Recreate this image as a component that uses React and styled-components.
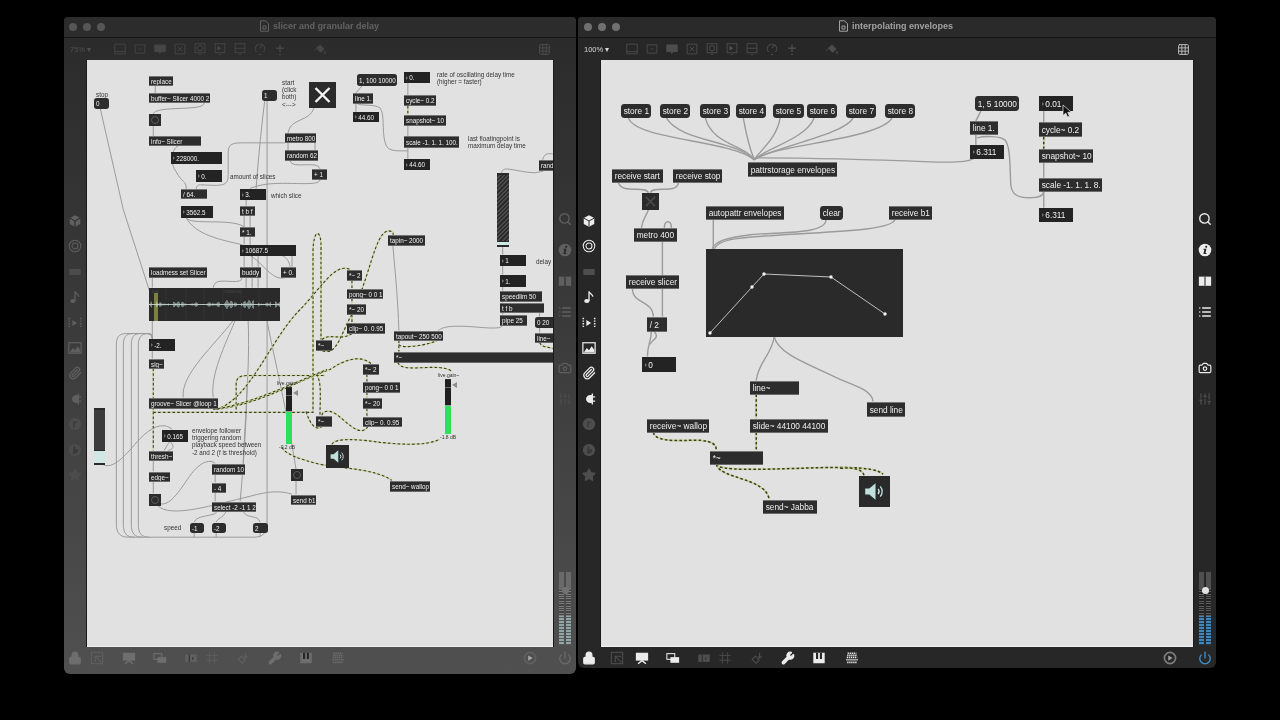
import React from "react";
import styled, { createGlobalStyle } from "styled-components";
import {
  Search,
  Lock,
  Wrench,
  Camera,
  SlidersVertical,
  Star,
  Paperclip,
  Power,
  Grid3x3,
  List,
} from "lucide-react";

const GlobalStyle = createGlobalStyle`
  html, body {
    margin: 0;
    background: #000;
    font-family: "Liberation Sans", Arial, sans-serif;
  }
`;

const Stage = styled.div`
  width: 1280px;
  height: 720px;
  box-sizing: border-box;
  padding: 17px 0 0 64px;
  display: flex;
  align-items: flex-start;
  gap: 2px;
  overflow: hidden;
  background: #000;
`;

const Window = styled.div`
  width: ${(p) => p.$w}px;
  height: ${(p) => p.$h}px;
  display: flex;
  flex-direction: column;
  border-radius: 4px 4px 6px 6px;
  overflow: hidden;
  filter: blur(0.35px);
  background: ${(p) =>
    p.$active ? "#272727" : "linear-gradient(180deg, #2a2a2a 0%, #3a3a3a 45%, #505050 100%)"};
`;

const TitleBar = styled.div`
  height: 20px;
  flex: none;
  display: flex;
  align-items: center;
  position: relative;
  padding-left: ${(p) => (p.$active ? 6 : 5)}px;
  gap: 6px;
  border-bottom: 1px solid #141414;
  background: ${(p) => (p.$active ? "#2a2a2a" : "#2c2c2c")};
`;

const Light = styled.span`
  width: 8px;
  height: 8px;
  border-radius: 50%;
  background: ${(p) => (p.$active ? "#707070" : "#565656")};
`;

const Title = styled.div`
  position: absolute;
  left: ${(p) => p.$x}px;
  top: 3px;
  display: flex;
  align-items: center;
  gap: 3px;
  font-size: 9px;
  font-weight: 700;
  color: ${(p) => (p.$active ? "#a2a2a2" : "#626262")};
`;

const Toolbar = styled.div`
  height: 22px;
  flex: none;
  display: flex;
  align-items: center;
  gap: 8px;
  padding-right: ${(p) => p.$right}px;
  color: ${(p) => (p.$active ? "#4d4d4d" : "#464646")};
`;

const ZoomLabel = styled.div`
  width: ${(p) => p.$w}px;
  margin-right: -8px;
  box-sizing: border-box;
  padding-left: 6px;
  font-size: 7.5px;
  color: ${(p) => (p.$active ? "#d6d6d6" : "#505050")};
`;

const ToolSlot = styled.span`
  display: flex;
  width: 12px;
  height: 12px;
  margin-left: ${(p) => p.$gap || 0}px;
`;

const GridSlot = styled.span`
  display: flex;
  margin-left: auto;
  color: ${(p) => (p.$active ? "#c8c8c8" : "#505050")};
`;

const Body = styled.div`
  flex: none;
  height: 587px;
  display: flex;
`;

const Sidebar = styled.div`
  width: 23px;
  flex: none;
  display: flex;
  flex-direction: column;
  align-items: center;
  box-sizing: border-box;
  padding-top: ${(p) => p.$top}px;
  padding-bottom: 2px;
  gap: ${(p) => p.$gap}px;
  border-${(p) => p.$edge}: 1px solid #1a1a1a;
`;

const SideSlot = styled.span`
  display: flex;
  width: 14px;
  height: 14px;
  margin-top: ${(p) => p.$gap || 0}px;
  color: ${(p) => (p.$off ? p.$dimOff : p.$dimOn)};
`;

const Canvas = styled.div`
  flex: 1;
  position: relative;
  overflow: hidden;
  background: #e1e1e1;
  font-size: ${(p) => p.$font}px;
  border-bottom: 1px solid #f2f2f2;
`;

const CableLayer = styled.svg`
  position: absolute;
  left: 0;
  top: 0;
  width: 100%;
  height: 100%;
  pointer-events: none;
`;

const Cable = styled.path`
  fill: none;
  stroke: #9b9b9b;
  stroke-width: ${(p) => p.$sw}px;
`;

const SignalBase = styled.path`
  fill: none;
  stroke: #c9d39a;
  stroke-width: ${(p) => p.$sw}px;
`;

const SignalDash = styled.path`
  fill: none;
  stroke: #39401f;
  stroke-width: ${(p) => p.$sw}px;
  stroke-dasharray: 2.6 2.2;
`;

const Node = styled.div`
  position: absolute;
  left: ${(p) => p.$x}px;
  top: ${(p) => p.$y}px;
  width: ${(p) => p.$w}px;
  height: ${(p) => p.$h}px;
  box-sizing: border-box;
  display: flex;
  align-items: center;
  white-space: nowrap;
  overflow: hidden;
  color: #f0f0f0;
  padding: 0 0.32em;
  background: ${(p) => (p.$kind === "num" ? "#232323" : "#2d2d2d")};
  border-radius: ${(p) => (p.$kind === "msg" ? "0.42em" : "0")};
  ${(p) =>
    p.$kind === "obj" &&
    `
    border-top: 0.21em solid #757575;
    border-bottom: 0.21em solid #6a6a6a;
  `}
`;

const NumArrow = styled.span`
  flex: none;
  width: 0;
  height: 0;
  margin-right: 0.2em;
  border-left: 0.36em solid #6f6f6f;
  border-top: 0.36em solid transparent;
  border-bottom: 0.36em solid transparent;
`;

const BangBox = styled.div`
  position: absolute;
  left: ${(p) => p.$x}px;
  top: ${(p) => p.$y}px;
  width: ${(p) => p.$s}px;
  height: ${(p) => p.$s}px;
  box-sizing: border-box;
  background: #2b2b2b;
  display: flex;
  align-items: center;
  justify-content: center;
`;

const BangRing = styled.span`
  width: 58%;
  height: 58%;
  border-radius: 50%;
  border: 1px solid #5c5c5c;
`;

const Comment = styled.div`
  position: absolute;
  left: ${(p) => p.$x}px;
  top: ${(p) => p.$y}px;
  white-space: pre;
  line-height: 1.14;
  color: #333;
`;

const DrawnBox = styled.div`
  position: absolute;
  left: ${(p) => p.$x}px;
  top: ${(p) => p.$y}px;
  width: ${(p) => p.$w}px;
  height: ${(p) => p.$h}px;
  display: flex;
  background: #2a2a2a;
`;

const SliderBox = styled.div`
  position: absolute;
  left: ${(p) => p.$x}px;
  top: ${(p) => p.$y}px;
  width: ${(p) => p.$w}px;
  height: ${(p) => p.$h}px;
  background: ${(p) =>
    p.$hatched
      ? "repeating-linear-gradient(135deg, #2c2c2c 0 1.5px, #4c4c4c 1.5px 3px)"
      : "#3c3c3c"};
  border-top: 2px solid #2a2a2a;
`;

const SliderFoot = styled.div`
  position: absolute;
  left: 0;
  right: 0;
  bottom: 0;
  height: ${(p) => p.$h}px;
  background: #cfe8e3;
  border-top: 1px solid #2a2a2a;
  border-bottom: 2px solid #2a2a2a;
`;

const GainTrack = styled.div`
  position: absolute;
  left: ${(p) => p.$x}px;
  top: ${(p) => p.$y}px;
  width: 6px;
  height: ${(p) => p.$h}px;
  background: #1f1f1f;
  border-top: 1px solid #333;
`;

const GainFill = styled.div`
  position: absolute;
  left: 0;
  right: 0;
  bottom: 0;
  height: ${(p) => p.$h}px;
  background: #2de05c;
  border-top: 1px solid #9c9c9c;
`;

const GainMark = styled.div`
  position: absolute;
  left: 0;
  right: 0;
  top: 7px;
  height: 1px;
  background: #6b6b6b;
`;

const GainThumb = styled.div`
  position: absolute;
  left: 7px;
  top: 2px;
  width: 0;
  height: 0;
  border-right: 5px solid #8d8d8d;
  border-top: 3px solid transparent;
  border-bottom: 3px solid transparent;
`;

const GainLabel = styled.div`
  position: absolute;
  left: ${(p) => p.$x}px;
  top: ${(p) => p.$y}px;
  font-size: 5px;
  color: #333;
  white-space: nowrap;
`;

const Pointer = styled.svg`
  position: absolute;
  left: ${(p) => p.$x}px;
  top: ${(p) => p.$y}px;
`;

const BottomBar = styled.div`
  height: 22px;
  flex: none;
  display: flex;
  align-items: center;
  padding-left: 4px;
  padding-right: 4px;
`;

const BarSlot = styled.span`
  display: flex;
  width: 14px;
  height: 14px;
  margin-left: ${(p) => p.$gap || 0}px;
  color: ${(p) => (p.$off ? p.$dimOff : p.$dimOn)};
`;

const PlaySlot = styled.span`
  display: flex;
  margin-left: auto;
  width: 14px;
  height: 14px;
  color: ${(p) => (p.$active ? "#9a9a9a" : "#656565")};
`;

const PowerSlot = styled.span`
  display: flex;
  width: 14px;
  height: 14px;
  margin-left: 21px;
  color: ${(p) => (p.$active ? "#3f93cf" : "#6a6a6a")};
`;

const Meter = styled.div`
  margin-top: auto;
  position: relative;
  display: flex;
  gap: 2px;
  height: 73px;
`;

const MeterBar = styled.div`
  width: 5px;
  background:
    linear-gradient(${(p) => p.$top} 0 18px, transparent 18px),
    repeating-linear-gradient(180deg, ${(p) => p.$tick} 0 1px, ${(p) => p.$track} 1px 2.4px) top / 100% 44px no-repeat,
    repeating-linear-gradient(180deg, ${(p) => p.$level} 0 2px, ${(p) => p.$gapColor} 2px 3px) bottom / 100% 30px no-repeat;
`;

const MeterKnob = styled.div`
  position: absolute;
  left: 50%;
  top: 15px;
  width: 7px;
  height: 7px;
  margin-left: -3.5px;
  border-radius: 50%;
  background: ${(p) => p.$color};
`;

const pathIcon = (children, fill = "none") => (
  <svg width="100%" height="100%" viewBox="0 0 16 16" fill={fill} stroke="currentColor" strokeWidth="1.2">
    {children}
  </svg>
);

const Cube = () =>
  pathIcon(
    <>
      <path d="M8 1.5l6 3.2v6.6l-6 3.2-6-3.2V4.7z" fill="currentColor" stroke="none" />
      <path d="M2.2 4.8L8 8l5.8-3.2M8 8v6.2" stroke="#272727" strokeWidth="1.1" />
    </>
  );
const Target = () =>
  pathIcon(
    <>
      <circle cx="8" cy="8" r="6.6" />
      <circle cx="8" cy="8" r="3.4" />
    </>
  );
const Bar = () => pathIcon(<rect x="1.5" y="4.5" width="13" height="7" rx="1" fill="currentColor" stroke="none" />);
const Note = () =>
  pathIcon(
    <>
      <ellipse cx="5.5" cy="12.6" rx="3" ry="2.2" fill="currentColor" stroke="none" />
      <path d="M8 12.5V1.5c.5 2.5 4 3 4.5 6" strokeWidth="1.5" />
    </>
  );
const Split = () =>
  pathIcon(
    <>
      <path d="M1.5 2v12M14.5 2v12" strokeDasharray="1.6 1.4" strokeWidth="1.8" />
      <path d="M5 4.5L10.5 8 5 11.5z" fill="currentColor" stroke="none" />
    </>
  );
const Picture = () =>
  pathIcon(
    <>
      <rect x="1" y="2" width="14" height="12" fill="none" strokeWidth="1.4" />
      <path d="M2 13l3.5-5 2.5 2.5L11 6l3 4v3z" fill="currentColor" stroke="none" />
    </>
  );
const Plug = () =>
  pathIcon(
    <path
      d="M1 8h3.5c.5-3 2.5-4.5 5-4.5H11V1.8h1.6v3H15v1.6h-2.4v3.2H15v1.6h-2.4v3H11v-1.7H9.5c-2.5 0-4.5-1.5-5-4.5H1z"
      fill="currentColor"
      stroke="none"
    />
  );
const Letter = ({ t }) => (
  <svg width="100%" height="100%" viewBox="0 0 16 16">
    <circle cx="8" cy="8" r="7" fill="currentColor" />
    <path
      d={t === "r" ? "M6 12V5h1.6v1.2C8.2 5.2 9 5 10.4 5v1.6C8.8 6.6 7.6 7 7.6 8.6V12z" : "M6.5 3.5h1.6v4C9.8 6 12 7 11.5 9.5 11 12 8 13 5.5 12z"}
      fill="#3a3a3a"
    />
  </svg>
);
const InfoDot = () => (
  <svg width="100%" height="100%" viewBox="0 0 16 16">
    <circle cx="8" cy="8" r="7.2" fill="currentColor" />
    <path d="M9.4 3.2a1.1 1.1 0 1 1-.01 0zM6.4 6.6h3.2L8.6 11.4h1v1.2H6.2l1-4.8h-1z" fill="#272727" />
  </svg>
);
const Book = () =>
  pathIcon(
    <>
      <rect x="1" y="3" width="14" height="10.5" fill="currentColor" stroke="none" />
      <path d="M8 3v10.5" stroke="#272727" />
    </>
  );
const Stand = () =>
  pathIcon(
    <>
      <rect x="1" y="2" width="14" height="9" fill="currentColor" stroke="none" />
      <path d="M8 11L3.5 14.5M8 11l4.5 3.5" strokeWidth="1.6" />
    </>
  );
const Piano = () =>
  pathIcon(
    <>
      <rect x="1.5" y="2" width="13" height="12" fill="currentColor" stroke="none" />
      <path d="M5.8 2v7M10.2 2v7" stroke="#272727" strokeWidth="2.4" />
    </>
  );
const Keys = () =>
  pathIcon(
    <path
      d="M3 2.5h10M2.5 5h11M2 7.5h12M1.5 10h13M2.5 13h11"
      strokeDasharray="1.5 0.8"
      strokeWidth="1.8"
    />
  );
const Windows = () =>
  pathIcon(
    <>
      <rect x="1" y="3" width="9" height="6.5" fill="none" />
      <rect x="5" y="7" width="10" height="6.5" fill="currentColor" stroke="none" />
    </>
  );
const Tagger = () =>
  pathIcon(
    <>
      <rect x="1.5" y="4" width="13" height="8.5" fill="currentColor" stroke="none" />
      <path d="M6 4v8.5M10 7v3" stroke="#2c2c2c" />
    </>
  );
const Hash = () => pathIcon(<path d="M5 1.5v13M11 1.5v13M1.5 5h13M1.5 10.5h13" strokeWidth="1" />);
const Snap = () =>
  pathIcon(
    <>
      <path d="M2.5 9.5L7 14l3.5-3.5L6 6z" />
      <path d="M11 2v6M8.8 6L11 8.2 13.2 6" />
    </>
  );
const Arrow = () =>
  pathIcon(
    <>
      <rect x="1.5" y="1.5" width="13" height="13" />
      <path d="M6 6l7 7M7 12H6V6h6v1" />
    </>
  );
const PlayRing = () => (
  <svg width="100%" height="100%" viewBox="0 0 16 16" fill="none">
    <circle cx="8" cy="8" r="6.4" stroke="currentColor" strokeWidth="1.9" opacity="0.75" />
    <path d="M6 5l5 3-5 3z" fill="#d0d0d0" opacity="0.7" />
  </svg>
);

const toolIcons = [
  <path key="a" d="M1 1.5h14v13H1zM1 11.5h14" />,
  <path key="b" d="M1.5 2.5h13v11h-13zM6 8h4" />,
  <path key="c" d="M1 2.5h14v9H9.5l-2 2.5v-2.5H1z" fill="currentColor" />,
  <path key="d" d="M1.5 1.5h13v13h-13zM5 5l6 6M11 5l-6 6" />,
  <g key="e">
    <rect x="1.5" y="1" width="13" height="12" />
    <circle cx="8" cy="7" r="3.6" />
    <path d="M6.5 15.5h3" />
  </g>,
  <g key="f">
    <rect x="1.5" y="1" width="13" height="12" />
    <path d="M5 4.5L9 7 5 9.5z" fill="currentColor" />
    <path d="M6.5 15.5h3" />
  </g>,
  <g key="g">
    <rect x="1.5" y="1" width="13" height="12" />
    <path d="M1.5 7h13M6.5 15.5h3" />
  </g>,
  <g key="h">
    <path d="M3.5 12a6.2 6.2 0 1 1 9 0M8 7l2.5-4M6.5 15.5h3" strokeWidth="1.4" />
  </g>,
  <path key="i" d="M8 2v10M3 7h10M6.5 15.5h3" strokeWidth="1.8" />,
];

const Bucket = () =>
  pathIcon(
    <>
      <path d="M8 2l6 6-5 5-6.5-6z" fill="currentColor" stroke="none" />
      <path d="M1 11c0-2 1-3 2-4M14.6 11l.9 2a1 1 0 1 1-2 0z" />
    </>
  );

const sideLeft = [
  [<Cube key="a" />],
  [<Target key="a" />],
  [<Bar key="a" />, true],
  [<Note key="a" />],
  [<Split key="a" />],
  [<Picture key="a" />],
  [<Paperclip key="a" width="100%" height="100%" strokeWidth={2.2} />],
  [<Plug key="a" />],
  [<Letter key="a" t="r" />, true],
  [<Letter key="a" t="b" />, true],
  [<Star key="a" width="100%" height="100%" fill="currentColor" />, true],
];

const sideRight = [
  [<Search key="a" width="100%" height="100%" strokeWidth={2.4} />, false, 0],
  [<InfoDot key="a" />, false, 17],
  [<Book key="a" />, false, 17],
  [<List key="a" width="100%" height="100%" strokeWidth={2.6} />, false, 17],
  [<Camera key="a" width="100%" height="100%" strokeWidth={2} />, false, 42],
  [<SlidersVertical key="a" width="100%" height="100%" strokeWidth={2} />, true, 17],
];

const barItems = (gaps) =>
  [
    [<Lock key="a" width="100%" height="100%" fill="currentColor" strokeWidth={2} />, false],
    [<Arrow key="a" />, true],
    [<Stand key="a" />, false],
    [<Windows key="a" />, false],
    [<Tagger key="a" />, true],
    [<Hash key="a" />, true],
    [<Snap key="a" />, true],
    [<Wrench key="a" width="100%" height="100%" fill="currentColor" strokeWidth={2} />, false],
    [<Piano key="a" />, false],
    [<Keys key="a" />, false],
  ].map(([icon, off], i) => ({ icon, off, gap: gaps[i] }));

const DocIcon = () => (
  <svg width="11" height="12" viewBox="0 0 11 12" fill="none" stroke="currentColor" strokeWidth="1">
    <path d="M1.5 .8h5l3 3v7.4h-8zM4 6h3v3H4z" />
  </svg>
);

const leftNodes = [
  ["obj", 149, 76, 24, 10, "replace"],
  ["obj", 149, 93, 61, 10, "buffer~ Slicer 4000 2"],
  ["obj", 149, 136, 52, 10, "info~ Slicer"],
  ["num", 171, 152, 51, 12, "228000."],
  ["num", 196, 170, 26, 12, "0."],
  ["obj", 181, 189, 26, 10, "/ 64."],
  ["num", 181, 206, 32, 12, "3562.5"],
  ["msg", 94, 98, 15, 11, "0"],
  ["msg", 262, 90, 15, 11, "1"],
  ["obj", 285, 133, 31, 10, "metro 800"],
  ["obj", 285, 150, 33, 11, "random 62"],
  ["obj", 312, 169, 15, 11, "+ 1"],
  ["num", 240, 189, 26, 11, "3."],
  ["obj", 240, 206, 15, 10, "t b f"],
  ["msg", 357, 74, 40, 12, "1, 100 10000"],
  ["num", 404, 72, 26, 11, "0."],
  ["obj", 353, 93, 20, 11, "line 1."],
  ["num", 353, 112, 26, 10, "44.60"],
  ["obj", 404, 95, 32, 11, "cycle~ 0.2"],
  ["obj", 404, 115, 42, 11, "snapshot~ 10"],
  ["obj", 404, 136, 55, 12, "scale -1. 1. 1. 100."],
  ["num", 404, 159, 26, 11, "44.60"],
  ["obj", 539, 160, 20, 11, "rand"],
  ["obj", 240, 227, 15, 10, "* 1."],
  ["num", 240, 245, 56, 11, "10687.5"],
  ["obj", 240, 267, 21, 11, "buddy"],
  ["obj", 281, 267, 15, 11, "+ 0."],
  ["obj", 149, 267, 58, 11, "loadmess set Slicer"],
  ["num", 149, 339, 26, 12, "-2."],
  ["obj", 149, 359, 15, 10, "sig~"],
  ["obj", 316, 340, 16, 11, "*~"],
  ["obj", 149, 398, 69, 11, "groove~ Slicer @loop 1"],
  ["num", 162, 430, 26, 12, "0.165"],
  ["obj", 149, 451, 24, 10, "thresh~"],
  ["obj", 149, 472, 21, 10, "edge~"],
  ["obj", 212, 464, 33, 11, "random 10"],
  ["obj", 212, 483, 14, 10, "- 4"],
  ["obj", 212, 502, 44, 10, "select -2 -1 1 2"],
  ["obj", 291, 495, 25, 10, "send b1"],
  ["msg", 190, 523, 14, 10, "-1"],
  ["msg", 212, 523, 14, 10, "-2"],
  ["msg", 253, 523, 15, 10, "2"],
  ["obj", 388, 235, 37, 11, "tapin~ 2000"],
  ["obj", 347, 270, 15, 11, "*~ 2"],
  ["obj", 347, 289, 36, 10, "pong~ 0 0 1"],
  ["obj", 347, 304, 19, 11, "*~ 20"],
  ["obj", 347, 323, 38, 11, "clip~ 0. 0.95"],
  ["obj", 394, 331, 49, 10, "tapout~ 250 500"],
  ["obj", 394, 352, 170, 11, "*~"],
  ["obj", 363, 364, 16, 11, "*~ 2"],
  ["obj", 363, 382, 37, 11, "pong~ 0 0 1"],
  ["obj", 363, 398, 19, 11, "*~ 20"],
  ["obj", 363, 417, 39, 10, "clip~ 0. 0.95"],
  ["obj", 316, 416, 16, 11, "*~"],
  ["obj", 390, 481, 40, 11, "send~ wallop"],
  ["num", 500, 255, 26, 11, "1"],
  ["num", 500, 275, 26, 12, "1."],
  ["obj", 500, 291, 42, 11, "speedlim 50"],
  ["obj", 500, 303, 44, 10, "t f b"],
  ["obj", 500, 315, 27, 11, "pipe 25"],
  ["msg", 535, 317, 24, 11, "0 20"],
  ["obj", 535, 333, 24, 10, "line~"],
];

const leftBangs = [
  [149, 114, 12],
  [149, 494, 12],
  [291, 469, 12],
];

const leftComments = [
  [96, 91, "stop"],
  [282, 79, "start\n(click\nboth)\n<--->"],
  [230, 173, "amount of slices"],
  [271, 192, "which slice"],
  [437, 71, "rate of oscillating delay time\n(higher = faster)"],
  [468, 135, "last floatingpoint is\nmaximum delay time"],
  [192, 427, "envelope follower\ntriggering random\nplayback speed between\n-2 and 2 (f is threshold)"],
  [164, 524, "speed"],
  [536, 258, "delay"],
];

const leftCables = [
  "M155 86V93",
  "M204 103C204 112 156 105 153 114",
  "M153 126V136",
  "M178 146C170 150 170 165 176 172C182 184 186 180 186 189",
  "M285 143H240C228 143 228 148 228 155V175C228 187 222 186 200 185C198 185 196 186 196 189",
  "M100 109L123 210L152 300",
  "M152 278V288",
  "M152 321V339",
  "M152 351V359",
  "M266 90C262 120 258 160 256 189",
  "M267 100V525C267 534 262 538 254 538H128C120 538 116 534 116 525V346C116 338 118 334 126 334H146C150 334 152 336 152 339",
  "M152 339C152 335 150 334 146 334H133C125 334 123 338 123 346V525C123 534 126 538 134 538",
  "M152 339C152 335 150 334 146 334H140C133 334 131 338 131 346V525C131 534 134 538 142 538",
  "M152 339C152 335 151 334 148 334C141 334 138 338 138 346V525C138 534 141 538 149 538",
  "M194 533V538M216 533V538M260 533V538",
  "M314 108C310 122 290 118 288 133",
  "M288 143V150M315 143V150",
  "M290 161C292 170 318 160 320 169",
  "M320 180C320 188 280 180 258 186C252 188 250 188 250 189",
  "M246 200V206",
  "M244 216V227M250 216V227",
  "M186 218C190 226 230 218 244 227",
  "M186 218C195 235 220 240 242 245",
  "M244 237V245M250 237V245",
  "M244 256V267M252 256V267M258 256V267",
  "M292 256V267",
  "M262 256C275 252 288 254 290 267",
  "M285 278C272 282 262 262 250 256",
  "M242 278C242 285 225 280 218 282C215 283 214 284 213 288",
  "M246 278V288M252 278V288M258 278V288",
  "M233 321C215 345 180 375 183 398",
  "M235 321C225 345 210 375 213 398",
  "M248 321C250 360 245 420 243 464",
  "M247 387C246 430 243 470 240 502",
  "M267 321C272 350 285 400 296 470",
  "M296 481V495",
  "M164 451C170 440 172 440 172 442",
  "M168 451C176 449 172 445 170 442",
  "M100 463C108 472 120 462 132 448C145 432 160 420 172 430",
  "M153 461V472",
  "M153 482V494",
  "M158 504C172 510 185 480 195 470C203 462 210 460 215 464",
  "M157 506C170 520 215 505 250 497C268 492 280 491 292 495",
  "M215 475V483M215 493V502",
  "M217 512C215 518 196 515 194 523",
  "M226 512C222 520 218 518 216 523",
  "M243 512C246 520 258 515 260 523",
  "M362 86L356 93",
  "M356 104V112",
  "M358 104C360 106 375 104 380 108C385 114 382 130 385 142C387 152 395 151 408 151",
  "M408 83V95M408 126V136M408 148V159",
  "M543 160C545 152 550 154 553 154",
  "M502 173C503 165 515 172 535 173C540 172 542 172 544 171",
  "M393 246C396 280 398 300 399 331",
  "M503 326C500 332 470 325 450 327C442 328 440 330 438 331",
  "M503 245V255M503 266V275M503 287V291M503 302V303M503 313V315",
  "M540 313V317M540 328V333",
];

const leftSignals = [
  "M153 369V451",
  "M153 413H313V253C313 228 322 228 321 250V340",
  "M216 410C250 400 270 340 300 310C320 290 335 262 350 270",
  "M216 410C260 405 300 380 330 370C345 360 360 355 371 364",
  "M360 295C372 265 378 225 392 232C394 233 393 235 393 235",
  "M352 281V289M352 299V304M352 315V323",
  "M352 334C340 342 330 333 322 340",
  "M352 315C345 325 338 352 328 352C322 352 320 350 320 351",
  "M367 375V382M367 393V398M367 409V417",
  "M368 427C360 440 345 420 335 414C328 410 322 412 322 416",
  "M306 412C310 425 316 432 322 427",
  "M316 375C322 380 320 400 320 416",
  "M236 410V385C236 378 240 376 248 376H325",
  "M213 410C250 405 290 385 327 370",
  "M282 448C285 455 300 460 320 465C350 470 375 470 392 481",
  "M332 445C335 438 360 440 380 443C400 445 425 447 440 440",
  "M399 341V352",
  "M399 345C402 350 430 345 437 341",
  "M398 363C402 375 440 362 452 372",
  "M540 343C542 348 548 347 553 349",
  "M408 106V115",
];

const rightNodes = [
  ["msg", 621, 104, 30, 14, "store 1"],
  ["msg", 660, 104, 30, 14, "store 2"],
  ["msg", 700, 104, 30, 14, "store 3"],
  ["msg", 736, 104, 30, 14, "store 4"],
  ["msg", 773, 104, 31, 14, "store 5"],
  ["msg", 807, 104, 30, 14, "store 6"],
  ["msg", 846, 104, 30, 14, "store 7"],
  ["msg", 885, 104, 30, 14, "store 8"],
  ["obj", 748, 162, 89, 15, "pattrstorage envelopes"],
  ["obj", 612, 169, 51, 14, "receive start"],
  ["obj", 673, 169, 49, 14, "receive stop"],
  ["obj", 706, 206, 78, 14, "autopattr envelopes"],
  ["msg", 820, 206, 23, 14, "clear"],
  ["obj", 889, 206, 43, 14, "receive b1"],
  ["obj", 634, 228, 43, 14, "metro 400"],
  ["obj", 626, 275, 53, 14, "receive slicer"],
  ["obj", 647, 317, 20, 15, "/ 2"],
  ["num", 642, 357, 34, 15, "0"],
  ["obj", 750, 381, 49, 14, "line~"],
  ["obj", 867, 402, 38, 15, "send line"],
  ["obj", 647, 419, 62, 14, "receive~ wallop"],
  ["obj", 750, 419, 78, 14, "slide~ 44100 44100"],
  ["obj", 710, 451, 53, 14, "*~"],
  ["obj", 763, 500, 54, 14, "send~ Jabba"],
  ["msg", 975, 96, 44, 15, "1, 5 10000"],
  ["num", 1039, 96, 34, 15, "0.01"],
  ["obj", 970, 121, 28, 14, "line 1."],
  ["num", 970, 145, 34, 14, "6.311"],
  ["obj", 1039, 122, 43, 15, "cycle~ 0.2"],
  ["obj", 1039, 149, 54, 14, "snapshot~ 10"],
  ["obj", 1039, 178, 63, 14, "scale -1. 1. 1. 8."],
  ["num", 1039, 208, 34, 14, "6.311"],
];

const rightCables = [
  "M628 118C635 140 730 140 754 160",
  "M666 118C680 142 735 140 754 160",
  "M705 118C712 145 745 145 754 160",
  "M743 118C746 135 750 150 754 160",
  "M780 118C776 140 760 150 754 160",
  "M814 118C805 140 765 148 754 160",
  "M853 118C845 135 770 148 754 160",
  "M892 118C880 140 770 145 754 160",
  "M754 158C800 158 880 160 930 162C960 163 975 162 977 155",
  "M981 111L976 121",
  "M976 135V145",
  "M977 138C985 136 1000 136 1005 140C1011 146 1010 170 1011 185C1012 195 1018 198 1030 198C1038 198 1043 197 1044 192",
  "M1044 111V122M1044 163V178M1044 192V208",
  "M618 183C622 195 645 185 648 193",
  "M678 183C676 195 652 185 650 193",
  "M648 210C645 218 642 220 641 228",
  "M664 228C664 220 671 220 671 228",
  "M662 242V317",
  "M632 289C632 305 652 300 653 317",
  "M651 332C650 345 647 345 647 357",
  "M654 332C660 340 650 340 650 345",
  "M713 220V249",
  "M826 220C825 235 780 232 750 235C725 238 715 242 712 249",
  "M895 220C890 232 820 232 770 236C735 238 718 240 714 249",
  "M774 337C772 355 758 362 756 381",
  "M774 337C778 355 810 365 840 380C860 388 872 392 873 402",
];

const rightSignals = [
  "M756 395V419",
  "M756 433V451",
  "M653 433C655 445 690 440 700 441C712 442 716 445 716 451",
  "M716 465C718 472 760 470 800 469C830 468 875 466 883 475",
  "M840 469C855 468 862 470 864 476",
  "M716 465C720 480 765 478 769 500",
  "M1044 137V149",
];

const Speaker = () => (
  <svg width="100%" height="100%" viewBox="0 0 30 30">
    <path d="M6 12h4l6-5v16l-6-5H6z" fill="#bfe0dc" />
    <path d="M18.5 12.5a4 4 0 0 1 0 5M20.5 10a7.5 7.5 0 0 1 0 10" fill="none" stroke="#bfe0dc" strokeWidth="1.3" />
  </svg>
);

const Cross = ({ color, stroke }) => (
  <svg width="100%" height="100%" viewBox="0 0 26 26">
    <path d="M6 6l14 14M20 6L6 20" stroke={color} strokeWidth={stroke} fill="none" />
  </svg>
);

// quiet spiky take with a few gaps, loudest between x 60 and 108
const waveBars = Array.from({ length: 131 }, (_, i) => {
  const quiet = Math.sin(i * 0.37) > 0.72 || (i > 48 && i < 58);
  const loud = i > 60 && i < 108 ? 1.25 : 0.85;
  const h = quiet ? 0.4 : (0.6 + 3 * Math.abs(Math.sin(i * 0.71) * Math.sin(i * 0.13 + 1))) * loud;
  return `M${i + 0.5} ${16.5 - h}V${16.5 + h}`;
}).join("");

const Waveform = () => (
  <svg width="100%" height="100%" viewBox="0 0 131 33">
    <path d="M17 0V33M37 0V33M55 0V33M74 0V33M92 0V33M110 0V33" stroke="#3a3a3a" strokeWidth="0.6" />
    <rect x="5" y="5" width="4" height="28" fill="#8d8f42" opacity="0.85" />
    <text x="3" y="4.5" fontSize="3.6" fill="#4c4c4c" fontFamily="Liberation Sans">0.00</text>
    <text x="75" y="4.5" fontSize="3.6" fill="#4c4c4c" fontFamily="Liberation Sans">128000.00</text>
    <path d={waveBars} stroke="#cfe9e4" strokeWidth="0.6" opacity="0.8" />
    <path d="M0 16.5H131" stroke="#e8f6f3" strokeWidth="0.6" />
  </svg>
);

const points = [
  [4, 84],
  [46, 38],
  [58, 25],
  [125, 28],
  [179, 65],
];

const Breakpoints = () => (
  <svg width="100%" height="100%" viewBox="0 0 197 88">
    <polyline points={points.map((p) => p.join(",")).join(" ")} fill="none" stroke="#e6e6e6" strokeWidth="0.8" />
    {points.map(([x, y]) => (
      <circle key={x} cx={x} cy={y} r="1.7" fill="#f2f2f2" />
    ))}
  </svg>
);

const Patch = ({ ox, oy, font, sw, nodes, bangs = [], comments = [], cables, signals, children }) => (
  <Canvas $font={font}>
    <CableLayer viewBox={`${ox} ${oy} ${font === 8.3 ? 592 : 466} 587`}>
      {cables.map((d) => (
        <Cable key={d} d={d} $sw={sw} />
      ))}
      {signals.map((d) => (
        <g key={d}>
          <SignalBase d={d} $sw={sw + 0.4} />
          <SignalDash d={d} $sw={sw + 0.1} />
        </g>
      ))}
    </CableLayer>
    {nodes.map(([kind, x, y, w, h, text]) => (
      <Node key={`${x}-${y}`} $kind={kind} $x={x - ox} $y={y - oy} $w={w} $h={h}>
        {kind === "num" && <NumArrow />}
        {text}
      </Node>
    ))}
    {bangs.map(([x, y, s]) => (
      <BangBox key={`${x}-${y}`} $x={x - ox} $y={y - oy} $s={s}>
        <BangRing />
      </BangBox>
    ))}
    {comments.map(([x, y, text]) => (
      <Comment key={text} $x={x - ox} $y={y - oy}>
        {text}
      </Comment>
    ))}
    {children}
  </Canvas>
);

const Gain = ({ x, y, h, fill, top, bottom, labelX }) => (
  <>
    <GainLabel $x={labelX} $y={y - 7}>{top}</GainLabel>
    <GainTrack $x={x} $y={y} $h={h}>
      <GainMark />
      <GainThumb />
      <GainFill $h={fill} />
    </GainTrack>
    <GainLabel $x={labelX + 2} $y={y + h + 1}>{bottom}</GainLabel>
  </>
);

const ChromeWindow = ({ active, w, h, title, titleX, zoom, zoomW, gridRight, gaps, children }) => {
  const dimOn = active ? "#ececec" : "#5f5f5f";
  const dimOff = active ? "#4e4e4e" : "#4c4c4c";
  return (
    <Window $active={active} $w={w} $h={h}>
      <TitleBar $active={active}>
        <Light $active={active} />
        <Light $active={active} />
        <Light $active={active} />
        <Title $active={active} $x={titleX}>
          <DocIcon />
          {title}
        </Title>
      </TitleBar>
      <Toolbar $active={active} $right={gridRight}>
        <ZoomLabel $active={active} $w={zoomW}>{zoom}</ZoomLabel>
        {toolIcons.map((icon) => (
          <ToolSlot key={icon.key}>
            <svg width="100%" height="100%" viewBox="0 0 16 16" fill="none" stroke="currentColor" strokeWidth="1.2">
              {icon}
            </svg>
          </ToolSlot>
        ))}
        <ToolSlot $gap={20}>
          <Bucket />
        </ToolSlot>
        <GridSlot $active={active}>
          <Grid3x3 width={15} height={13} strokeWidth={1.6} />
        </GridSlot>
      </Toolbar>
      <Body>
        <Sidebar $edge="right" $top={154} $gap={11.4}>
          {sideLeft.map(([icon, off], i) => (
            <SideSlot key={i} $off={off} $dimOn={dimOn} $dimOff={dimOff}>
              {icon}
            </SideSlot>
          ))}
        </Sidebar>
        {children}
        <Sidebar $edge="left" $top={152} $gap={0}>
          {sideRight.map(([icon, off, gap], i) => (
            <SideSlot key={i} $off={off} $gap={gap} $dimOn={dimOn} $dimOff={dimOff}>
              {icon}
            </SideSlot>
          ))}
          <Meter>
            {[0, 1].map((n) => (
              <MeterBar
                key={n}
                $top={active ? "#4f4f4f" : "#6a6a6a"}
                $tick={active ? "#5c5c5c" : "#7c7c7c"}
                $track={active ? "#222" : "#454545"}
                $level={active ? "#3f86bd" : "#8fa6a9"}
                $gapColor={active ? "#24384a" : "#5a5a5a"}
              />
            ))}
            <MeterKnob $color={active ? "#e4e4e4" : "#727272"} />
          </Meter>
        </Sidebar>
      </Body>
      <BottomBar>
        {barItems(gaps).map((item, i) => (
          <BarSlot key={i} $gap={item.gap} $off={item.off} $dimOn={dimOn === "#5f5f5f" ? "#6e6e6e" : dimOn} $dimOff={active ? dimOff : "#606060"}>
            {item.icon}
          </BarSlot>
        ))}
        <PlaySlot $active={active}>
          <PlayRing />
        </PlaySlot>
        <PowerSlot $active={active}>
          <Power width="100%" height="100%" strokeWidth={2.2} />
        </PowerSlot>
      </BottomBar>
    </Window>
  );
};

const App = () => (
  <>
    <GlobalStyle />
    <Stage>
      <ChromeWindow
        w={512}
        h={657}
        title="slicer and granular delay"
        titleX={195}
        zoom="75%  ▾"
        zoomW={50}
        gridRight={24}
        gaps={[0, 8, 18, 17, 17, 7, 17, 18, 17, 18]}
      >
        <Patch ox={87} oy={60} font={6.3} sw={1} nodes={leftNodes} bangs={leftBangs} comments={leftComments} cables={leftCables} signals={leftSignals}>
          <DrawnBox $x={222} $y={22} $w={27} $h={26}>
            <Cross color="#f2f2f2" stroke={2.4} />
          </DrawnBox>
          <DrawnBox $x={62} $y={228} $w={131} $h={33}>
            <Waveform />
          </DrawnBox>
          <DrawnBox $x={239} $y={385} $w={23} $h={23}>
            <Speaker />
          </DrawnBox>
          <SliderBox $x={7} $y={348} $w={11} $h={55}>
            <SliderFoot $h={12} />
          </SliderBox>
          <SliderBox $x={410} $y={113} $w={12} $h={72} $hatched>
            <SliderFoot $h={3} />
          </SliderBox>
          <Gain x={199} y={327} h={56} fill={32} labelX={190} top="live.gain~" bottom="-0.2 dB" />
          <Gain x={358} y={319} h={54} fill={28} labelX={351} top="live.gain~" bottom="-1.8 dB" />
        </Patch>
      </ChromeWindow>
      <ChromeWindow
        active
        w={638}
        h={651}
        title="interpolating envelopes"
        titleX={260}
        zoom="100%  ▾"
        zoomW={48}
        gridRight={25}
        gaps={[0, 14, 11, 17, 17, 7, 18, 17, 17, 19]}
      >
        <Patch ox={601} oy={60} font={8.3} sw={1.4} nodes={rightNodes} cables={rightCables} signals={rightSignals}>
          <DrawnBox $x={41} $y={133} $w={17} $h={17}>
            <Cross color="#4b4b4b" stroke={2.4} />
          </DrawnBox>
          <DrawnBox $x={105} $y={189} $w={197} $h={88}>
            <Breakpoints />
          </DrawnBox>
          <DrawnBox $x={258} $y={416} $w={31} $h={31}>
            <Speaker />
          </DrawnBox>
          <Pointer $x={461} $y={44} width="10" height="14" viewBox="0 0 10 14">
            <path d="M1 1v10.5l2.8-2.4 1.8 4 1.9-.9-1.8-3.9H9.5z" fill="#111" stroke="#eee" strokeWidth="0.7" />
          </Pointer>
        </Patch>
      </ChromeWindow>
    </Stage>
  </>
);

export default App;
